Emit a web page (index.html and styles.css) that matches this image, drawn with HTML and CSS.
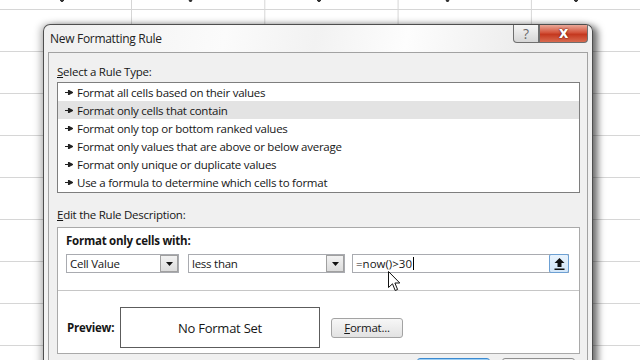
FILE: index.html
```html
<!DOCTYPE html>
<html lang="en">
  <head>
    <meta charset="UTF-8" />
    <meta name="viewport" content="width=device-width, initial-scale=1.0" />
    <title>New Formatting Rule</title>
    <link rel="stylesheet" href="styles.css">
  </head>
  <body>
    <div class="sheet-top">
      <i></i><i></i><i></i><i></i><i></i>
    </div>

    <div class="dialog">
      <div class="titlebar">
        <span class="title">New Formatting Rule</span>
        <div class="caption-btns">
          <button class="help-btn">?</button>
          <button class="close-btn">x</button>
        </div>
      </div>

      <div class="dialog-body">
        <div class="section-label"><u>S</u>elect a Rule Type:</div>
        <ul class="rule-list">
          <li><svg class="arrow" width="8" height="5" viewBox="0 0 8 5"><path d="M0 2.5h4M3.5 0.3l4.5 2.2L3.5 4.7z" stroke="#222" stroke-width="1.1" fill="#222"/></svg>Format all cells based on their values</li>
          <li class="selected"><svg class="arrow" width="8" height="5" viewBox="0 0 8 5"><path d="M0 2.5h4M3.5 0.3l4.5 2.2L3.5 4.7z" stroke="#222" stroke-width="1.1" fill="#222"/></svg>Format only cells that contain</li>
          <li><svg class="arrow" width="8" height="5" viewBox="0 0 8 5"><path d="M0 2.5h4M3.5 0.3l4.5 2.2L3.5 4.7z" stroke="#222" stroke-width="1.1" fill="#222"/></svg>Format only top or bottom ranked values</li>
          <li><svg class="arrow" width="8" height="5" viewBox="0 0 8 5"><path d="M0 2.5h4M3.5 0.3l4.5 2.2L3.5 4.7z" stroke="#222" stroke-width="1.1" fill="#222"/></svg>Format only values that are above or below average</li>
          <li><svg class="arrow" width="8" height="5" viewBox="0 0 8 5"><path d="M0 2.5h4M3.5 0.3l4.5 2.2L3.5 4.7z" stroke="#222" stroke-width="1.1" fill="#222"/></svg>Format only unique or duplicate values</li>
          <li><svg class="arrow" width="8" height="5" viewBox="0 0 8 5"><path d="M0 2.5h4M3.5 0.3l4.5 2.2L3.5 4.7z" stroke="#222" stroke-width="1.1" fill="#222"/></svg>Use a formula to determine which cells to format</li>
        </ul>

        <div class="section-label second"><u>E</u>dit the Rule Description:</div>
        <div class="rule-panel">
          <div class="rule-top">
            <div class="rule-heading">Format only cells with:</div>
            <div class="criteria">
              <div class="combo combo-value">
                <span>Cell Value</span>
                <span class="drop"><svg width="7" height="4" viewBox="0 0 7 4"><path d="M0 0h7L3.5 4z" fill="#111"/></svg></span>
              </div>
              <div class="combo combo-op">
                <span>less than</span>
                <span class="drop"><svg width="7" height="4" viewBox="0 0 7 4"><path d="M0 0h7L3.5 4z" fill="#111"/></svg></span>
              </div>
              <div class="formula">
                <span class="formula-text">=now()&gt;30<i class="caret"></i></span>
                <span class="ref-btn">
                  <svg width="11" height="12" viewBox="0 0 11 12"><path d="M5.5 0L10.5 5H7.5V9H3.5V5H0.5Z" fill="#111"/><rect x="0.5" y="10.5" width="10" height="1.5" fill="#111"/></svg>
                </span>
              </div>
            </div>
          </div>
          <div class="preview-row">
            <span class="preview-label">Preview:</span>
            <div class="preview-box">No Format Set</div>
            <button class="format-btn"><u>F</u>ormat...</button>
          </div>
        </div>

        <div class="footer-btns">
          <button class="ok-btn"></button>
          <button class="cancel-btn"></button>
        </div>
      </div>
    </div>

    <svg class="cursor" width="13" height="21" viewBox="0 0 13 21">
      <path d="M0.5 0.5V16.5L4.5 12.8L7.2 19.5L9.6 18.5L6.9 12H11.8Z" fill="#fff" stroke="#111" stroke-width="1" stroke-linejoin="round"/>
    </svg>
  </body>
</html>
```

FILE: styles.css
```css
:root {
  --grid: #d6d6d6;
  --face: #f0f0f0;
  --text: #161616;
}
* {
  box-sizing: border-box;
  margin: 0;
  padding: 0;
}
body {
  position: relative;
  width: 640px;
  height: 360px;
  overflow: hidden;
  font-family: "Open Sans", "Noto Sans", sans-serif;
  font-size: 11.5px;
  letter-spacing: -0.25px;
  color: var(--text);
  background-color: #fff;
  background-image:
    linear-gradient(to bottom, var(--grid) 1px, transparent 1px),
    linear-gradient(to right, var(--grid) 1px, transparent 1px);
  background-size: 100% 42px, 133.3px 100%;
  background-position: 0 9px, -2.3px 0;
}
button {
  font-family: inherit;
  font-size: inherit;
  letter-spacing: inherit;
  color: inherit;
}

/* descenders of the sheet row cut off above the window */
.sheet-top {
  display: flex;
  height: 9px;
  margin-left: -2px;
}
.sheet-top i {
  display: block;
  width: 133px;
  height: 4px;
  background: radial-gradient(circle at 50% 0, #333 1.6px, transparent 2.2px);
}

/* dialog window */
.dialog {
  position: absolute;
  left: 43px;
  top: 24px;
  width: 550px;
  height: 345px;
  border: 1px solid #4e4e4e;
  border-bottom: none;
  border-radius: 7px 7px 0 0;
  padding: 0 4px;
  background: linear-gradient(100deg, #efefef 0%, #fbfbfb 30%, #f2f2f2 45%, #fdfdfd 60%, #ececec 80%, #f3f3f3 100%);
  box-shadow: 5px 2px 7px rgba(0, 0, 0, 0.55), -3px 0 7px rgba(0, 0, 0, 0.25);
}
.titlebar {
  display: flex;
  justify-content: space-between;
  align-items: flex-start;
  height: 27px;
}
.title {
  font-size: 12px;
  letter-spacing: -0.3px;
  line-height: 27px;
  padding-left: 2px;
  color: #222;
}
.caption-btns {
  display: flex;
}
.caption-btns button {
  height: 18px;
  border: 1px solid #6f6f6f;
  border-top: none;
  display: flex;
  align-items: center;
  justify-content: center;
}
.help-btn {
  width: 26px;
  border-radius: 0 0 0 4px;
  background: linear-gradient(#f6f6f6, #d6d6d6);
  color: #6a6a6a;
  font-size: 14px;
  border-right: none;
}
.close-btn {
  width: 49px;
  border-radius: 0 0 4px 0;
  background: linear-gradient(#eaa898, #d3533b 45%, #c4381f 55%, #d96a4f);
  color: #fff;
  font-weight: bold;
  font-size: 16px;
  text-shadow: 0 0 2px #6b1b0c, 0 0 1px #6b1b0c;
  padding-bottom: 3px;
}

.dialog-body {
  height: 320px;
  border: 1px solid #a2a2a2;
  border-bottom: none;
  background: var(--face);
  padding: 0 7px 0 8px;
}
.section-label {
  line-height: 16px;
  margin-top: 11px;
  margin-bottom: 2px;
}
.section-label.second {
  margin-top: 14px;
  margin-bottom: 4px;
}
.rule-list {
  list-style: none;
  background: #fff;
  border: 1px solid #7e7e7e;
  padding-bottom: 1px;
}
.rule-list li {
  display: flex;
  align-items: center;
  height: 18px;
  padding-left: 7px;
}
.rule-list li.selected {
  background: #e3e3e3;
}
.arrow {
  margin-right: 4px;
  flex-shrink: 0;
}

.rule-panel {
  background: #fff;
  border: 1px solid #a9a9a9;
}
.rule-top {
  padding: 5px 8px 17px;
  border-bottom: 1px solid #c6c6c6;
}
.rule-heading {
  font-weight: bold;
  line-height: 16px;
  margin-bottom: 5px;
}
.criteria {
  display: flex;
  gap: 9px;
}
.combo,
.formula {
  display: flex;
  align-items: center;
  justify-content: space-between;
  height: 19px;
  border: 1px solid #a9abb0;
  padding-left: 3px;
  background: #fff;
}
.combo-value {
  width: 113px;
}
.combo-op {
  width: 157px;
}
.drop {
  display: flex;
  align-items: center;
  justify-content: center;
  width: 18px;
  height: 17px;
  border: 1px solid #a0a0a0;
  background: linear-gradient(#f2f2f2, #dcdcdc);
}
.formula {
  width: 217px;
  margin-left: -2px;
  padding-left: 3px;
}
.formula-text {
  display: flex;
  align-items: center;
  letter-spacing: 0;
}
.caret {
  display: inline-block;
  width: 1px;
  height: 13px;
  background: #000;
  margin-left: 1px;
}
.ref-btn {
  display: flex;
  align-items: center;
  justify-content: center;
  width: 20px;
  height: 19px;
  margin-right: -1px;
  border: 1px solid #6da0d3;
  border-radius: 2px;
  background: linear-gradient(#e8f3fd, #d3e6f8);
}

.preview-row {
  display: flex;
  align-items: center;
  padding: 16px 8px 5px 9px;
}
.preview-label {
  font-weight: bold;
  width: 53px;
}
.preview-box {
  width: 200px;
  height: 41px;
  border: 1px solid #5c5c5c;
  display: flex;
  align-items: center;
  justify-content: center;
  font-size: 13px;
}
.format-btn {
  margin-left: 11px;
  width: 72px;
  height: 20px;
  border: 1px solid #a3a3a3;
  border-radius: 3px;
  background: linear-gradient(#f7f7f7, #e2e2e2);
}

.footer-btns {
  display: flex;
  justify-content: flex-end;
  gap: 12px;
  margin-top: 4px;
  padding-right: 5px;
}
.footer-btns button {
  width: 73px;
  height: 23px;
  border-radius: 3px;
  background: linear-gradient(#f3f3f3, #e3e3e3);
}
.ok-btn {
  border: 1px solid #3c8ad0;
  box-shadow: inset 0 0 0 1px #9fd0f5;
}
.cancel-btn {
  border: 1px solid #8f8f8f;
}

.cursor {
  position: absolute;
  left: 388px;
  top: 271px;
}
```
